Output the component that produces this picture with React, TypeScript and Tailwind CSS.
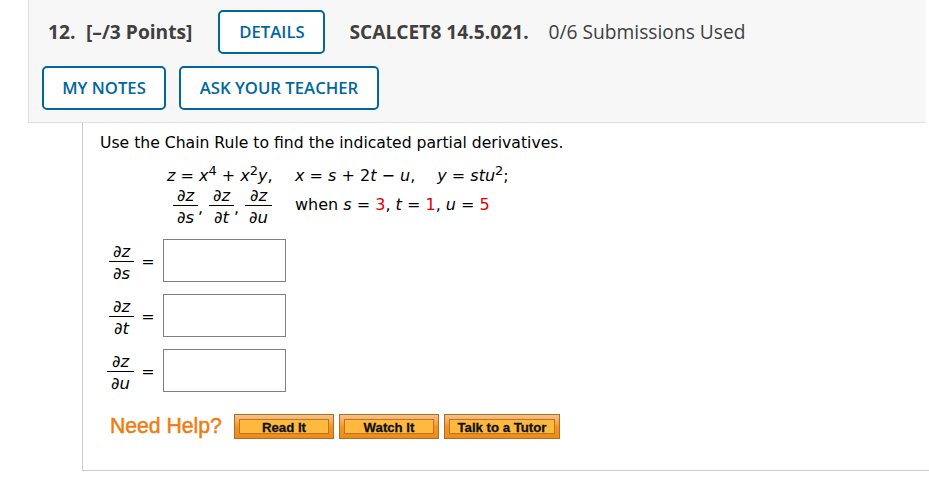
import type { ReactNode } from 'react';

const body = "font-['DejaVu_Sans',sans-serif]";

const V = ({ children }: { children: ReactNode }) => <i>{children}</i>;

const Red = ({ children }: { children: ReactNode }) => <span className="text-[#e00000]">{children}</span>;

const Sup = ({ children }: { children: ReactNode }) => (
  <sup className="static text-[13px] leading-none align-[6px]">{children}</sup>
);

const Frac = ({ bottom, width = 'w-[25px]' }: { bottom: string; width?: string }) => (
  <span className={`inline-flex flex-col items-center italic text-[16.5px] leading-[20px] whitespace-nowrap ${width}`}>
    <span className="h-[19px]">∂z</span>
    <span className="w-full border-t border-black h-[22px] pt-[2px]">
      <span className="block text-center">∂{bottom}</span>
    </span>
  </span>
);

const OutlineButton = ({ label, width }: { label: string; width: string }) => (
  <button className={`h-[44px] ${width} rounded-[5px] border-2 border-[#00669e] text-[#00669e] font-semibold text-[16.7px] bg-white`}>
    {label}
  </button>
);

const HelpButton = ({ label, width }: { label: string; width: string }) => (
  <button className={`h-[25px] ${width} border border-[#a86f2b] bg-gradient-to-b from-[#f5c28a] via-[#f7941f] to-[#f08a1a] p-[4px] flex`}>
    <span className="flex-1 h-full border border-[#b5762a] bg-[#ffb93f] text-[#111] text-[13.2px] font-bold leading-[15px] font-['Liberation_Sans',sans-serif] [-webkit-text-stroke:0.3px_#111]">
      {label}
    </span>
  </button>
);

const rows = ['s', 't', 'u'];

export default function App() {
  return (
    <div className="w-[929px] h-[504px] bg-white overflow-hidden pl-[28px] text-[#000]">
      <div className="w-[898px] h-[123px] bg-[#f7f7f7] border-l border-b border-[#e0e0e0] pt-[10px] font-['Open_Sans',sans-serif] text-[#3f3f3f] text-[19.2px]">
        <div className="flex items-center h-[44px] pl-[19px]">
          <b className="font-bold w-[38px]">12.</b>
          <b className="font-bold">[–/3 Points]</b>
          <div className="ml-[26px]">
            <OutlineButton label="DETAILS" width="w-[107px]" />
          </div>
          <b className="font-bold ml-[24px]">SCALCET8 14.5.021.</b>
          <span className="ml-[20px]">0/6 Submissions Used</span>
        </div>
        <div className="flex gap-[13px] mt-[12px] pl-[13px]">
          <OutlineButton label="MY NOTES" width="w-[124px]" />
          <OutlineButton label="ASK YOUR TEACHER" width="w-[200px]" />
        </div>
      </div>

      <div className={`ml-[54px] h-[348px] border-l border-b border-[#ccc] pl-[17px] pt-[10px] text-[16px] ${body}`}>
        <p className="leading-[20px] text-[15.63px]">Use the Chain Rule to find the indicated partial derivatives.</p>

        <div className="flex ml-[67px] mt-[11px]">
          <div className="w-[128px]">
            <div className="h-[22px] leading-[22px] whitespace-nowrap">
              <V>z</V> = <V>x</V><Sup>4</Sup> + <V>x</V><Sup>2</Sup><V>y</V>,
            </div>
            <div className="flex pl-[6px]">
              <Frac bottom="s" /><span className="w-[11px] mt-[10px]">,</span>
              <Frac bottom="t" /><span className="w-[11px] mt-[10px]">,</span>
              <Frac bottom="u" width="w-[27px]" />
            </div>
          </div>
          <div>
            <div className="h-[22px] leading-[22px] whitespace-nowrap">
              <V>x</V> = <V>s</V> + 2<V>t</V> − <V>u</V>,<span className="ml-[22px]" /><V>y</V> = <V>stu</V><Sup>2</Sup>;
            </div>
            <div className="mt-[8px] leading-[22px] whitespace-nowrap">
              when <V>s</V> = <Red>3</Red>, <V>t</V> = <Red>1</Red>, <V>u</V> = <Red>5</Red>
            </div>
          </div>
        </div>

        <div className="mt-[12px] flex flex-col gap-[12px]">
          {rows.map((r) => (
            <div key={r} className="flex items-center h-[43px]">
              <div className={`w-[39px] flex mt-[3px] ${r === 'u' ? 'pl-[7px]' : 'pl-[9px]'}`}>
                <Frac bottom={r} width={r === 'u' ? 'w-[27px]' : 'w-[25px]'} />
              </div>
              <span className="w-[18px] text-center mt-[2px]">=</span>
              <div className="w-[6px]" />
              <input className="w-[123px] h-[43px] bg-white border border-[#808080]" />
            </div>
          ))}
        </div>

        <div className="flex items-center mt-[18px] ml-[10px] font-['Liberation_Sans',sans-serif]">
          <span className="text-[#ee7d11] text-[21.2px] font-medium w-[124px] [-webkit-text-stroke:0.5px_#ee7d11]">Need Help?</span>
          <div className="flex gap-[5px] mt-[1px]">
            <HelpButton label="Read It" width="w-[100px]" />
            <HelpButton label="Watch It" width="w-[100px]" />
            <HelpButton label="Talk to a Tutor" width="w-[116px]" />
          </div>
        </div>
      </div>
    </div>
  );
}
